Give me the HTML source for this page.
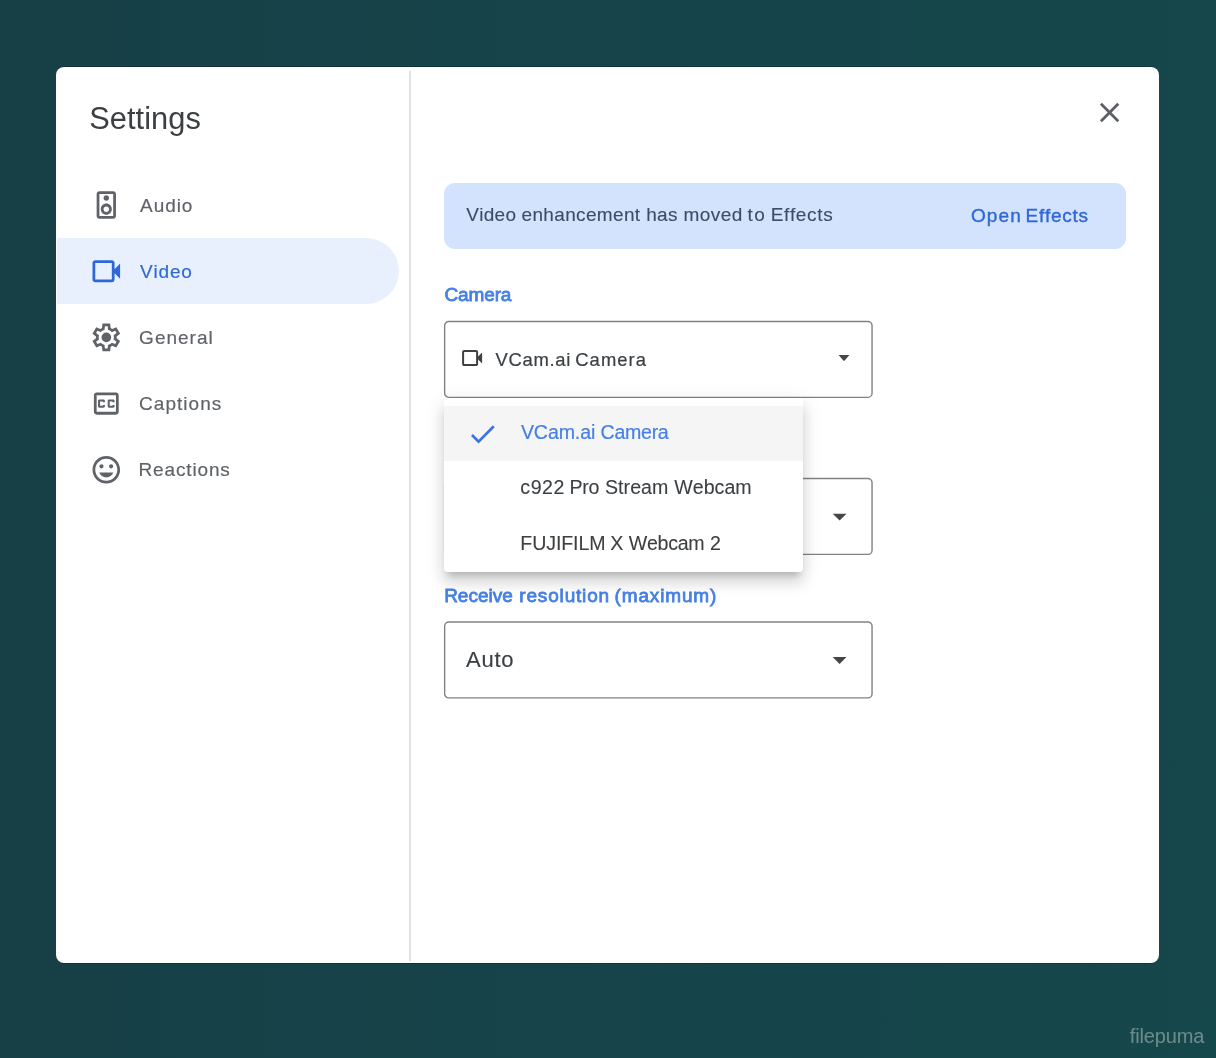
<!DOCTYPE html>
<html lang="en"><head><meta charset="utf-8"><title>Settings</title>
<style>
html,body{margin:0;padding:0}
body{width:1216px;height:1058px;overflow:hidden;position:relative;
 background:linear-gradient(90deg,#163f46 0%,#16444a 50%,#15484a 100%);
 font-family:"Liberation Sans",sans-serif;font-kerning:none}
.t{position:absolute;white-space:nowrap;line-height:1;margin:0;padding:0;font-weight:400;will-change:transform}
.i{position:absolute;display:block}
.w{position:absolute;top:0;white-space:nowrap}
.abs{position:absolute;box-sizing:border-box}
#dlg{left:56.4px;top:66.8px;width:1103.1px;height:896.2px;background:#fff;border-radius:8px;
 box-shadow:0 -1px 0.5px -0.2px rgba(0,0,0,.28),0 1px 0.5px -0.2px rgba(0,0,0,.28)}
#div{left:409.3px;top:71px;width:1.5px;height:889.5px;background:#e2e2e2}
#pill{left:56.5px;top:237.9px;width:342px;height:66.2px;background:#e8f0fe;border-radius:0 33.1px 33.1px 0}
#ban{left:444.1px;top:183px;width:682.3px;height:66.1px;background:#d3e3fd;border-radius:11px}
#menu{left:444.1px;top:397.8px;width:358.6px;height:174px;background:#fff;border-radius:4px;
 box-shadow:0 6.9px 6.9px -4.1px rgba(0,0,0,.2),0 11px 13.8px 1.4px rgba(0,0,0,.10),0 4.1px 19.3px 2.8px rgba(0,0,0,.07)}
#msel{left:444.1px;top:405.9px;width:358.6px;height:55.1px;background:#f5f5f5}
</style></head><body>

<div role="dialog" aria-label="Settings">
<div id="dlg" class="abs"></div>
<div id="div" class="abs"></div>
<h1 class="t" style="left:0;top:104px;font-size:30.8px;color:#3c4043;"><span class="w" style="left:89.20px;letter-spacing:0.046px">Settings</span></h1>
<nav aria-label="Settings sections">
<div id="pill" class="abs"></div>
<svg class="i" style="left:89px;top:188px" width="36" height="36"><g transform="translate(0.75 0.45) scale(1.3790)"><path fill="#5f6368" d="M17 2H7c-1.1 0-2 .9-2 2v16c0 1.1.9 1.99 2 1.99L17 22c1.1 0 2-.9 2-2V4c0-1.1-.9-2-2-2zM7 20V4h10v16H7zm5-11c1.1 0 2-.9 2-2s-.9-2-2-2c-1.11 0-2 .9-2 2s.89 2 2 2zm0 2c-2.21 0-4 1.79-4 4s1.79 4 4 4 4-1.79 4-4-1.79-4-4-4zm0 6c-1.1 0-2-.9-2-2s.9-2 2-2 2 .9 2 2-.9 2-2 2z"/></g></svg>
<div class="t" role="tab" aria-selected="false" style="left:0;top:196px;font-size:19px;color:#5f6368;-webkit-text-stroke:0.18px #5f6368;"><span class="w" style="left:140.04px;letter-spacing:0.945px">Audio</span></div>
<svg class="i" style="left:89px;top:254px" width="36" height="36"><g transform="translate(0.75 0.65) scale(1.3790)"><path fill="#2f68d6" d="M4 20q-.825 0-1.412-.587Q2 18.825 2 18V6q0-.825.588-1.412Q3.175 4 4 4h12q.825 0 1.413.588Q18 5.175 18 6v4.5l4-4v11l-4-4V18q0 .825-.587 1.413Q16.825 20 16 20Zm0-2h12V6H4v12Z"/></g></svg>
<div class="t" role="tab" aria-selected="true" style="left:0;top:262px;font-size:19px;color:#2f68d6;-webkit-text-stroke:0.18px #2f68d6;"><span class="w" style="left:140.00px;letter-spacing:0.807px">Video</span></div>
<svg class="i" style="left:89px;top:320px" width="36" height="36"><g transform="translate(0.75 0.85) scale(1.3790)"><path fill="#5f6368" d="m9.25 22-.4-3.2q-.325-.125-.612-.3-.288-.175-.563-.375L4.7 19.375l-2.750-4.750 2.575-1.950Q4.500 12.500 4.500 12.338v-.675q0-.163.025-.338L1.950 9.375l2.750-4.750 2.975 1.250q.275-.2.575-.375.3-.175.6-.3l.4-3.2h5.500l.4 3.200q.325.125.613.300.287.175.562.375l2.975-1.250 2.750 4.750-2.575 1.950q.025.175.025.338v.674q0 .163-.050.338l2.575 1.950-2.750 4.750-2.950-1.250q-.275.200-.575.375-.300.175-.600.300l-.400 3.200ZM11 20h1.975l.350-2.650q.775-.200 1.438-.588.662-.387 1.212-.937l2.475 1.025.975-1.700-2.150-1.625q.125-.350.175-.738.050-.387.050-.787t-.050-.788q-.050-.387-.175-.737l2.150-1.625-.975-1.700-2.475 1.050q-.550-.575-1.212-.963-.663-.387-1.438-.587L13 4h-1.975l-.350 2.650q-.775.200-1.437.587-.663.388-1.213.938L5.550 7.150l-.975 1.700 2.150 1.600q-.125.375-.175.750-.050.375-.050.800 0 .400.050.775t.175.750l-2.150 1.625.975 1.700 2.475-1.050q.550.575 1.213.962.662.388 1.437.588Z"/><circle cx="12.05" cy="12" r="3.5" fill="#5f6368"/></g></svg>
<div class="t" role="tab" aria-selected="false" style="left:0;top:328px;font-size:19px;color:#5f6368;-webkit-text-stroke:0.18px #5f6368;"><span class="w" style="left:139.12px;letter-spacing:0.995px">General</span></div>
<svg class="i" style="left:89px;top:387px" width="36" height="36"><g transform="translate(0.75 0.05) scale(1.3790)"><path fill="#5f6368" d="M19 4H5c-1.11 0-2 .9-2 2v12c0 1.1.89 2 2 2h14c1.1 0 2-.9 2-2V6c0-1.1-.9-2-2-2zm0 14H5V6h14v12zM7 15h3c.55 0 1-.45 1-1v-1H9.500v.5h-2v-3h2v.5H11v-1c0-.55-.45-1-1-1H7c-.55 0-1 .45-1 1v4c0 .55.45 1 1 1zm7 0h3c.55 0 1-.45 1-1v-1h-1.500v.5h-2v-3h2v.5H18v-1c0-.55-.45-1-1-1h-3c-.55 0-1 .45-1 1v4c0 .55.45 1 1 1z"/></g></svg>
<div class="t" role="tab" aria-selected="false" style="left:0;top:394px;font-size:19px;color:#5f6368;-webkit-text-stroke:0.18px #5f6368;"><span class="w" style="left:139.12px;letter-spacing:1.029px">Captions</span></div>
<svg class="i" style="left:89px;top:453px" width="36" height="36"><g transform="translate(0.75 0.25) scale(1.3790)"><path fill="#5f6368" d="M11.99 2C6.47 2 2 6.48 2 12s4.47 10 9.990 10C17.520 22 22 17.520 22 12S17.520 2 11.990 2zM12 20c-4.420 0-8-3.580-8-8s3.580-8 8-8 8 3.580 8 8-3.580 8-8 8zm3.500-9c.830 0 1.500-.670 1.500-1.500S16.330 8 15.500 8 14 8.670 14 9.500s.670 1.500 1.500 1.500zm-7 0c.830 0 1.500-.670 1.500-1.500S9.330 8 8.500 8 7 8.670 7 9.500 7.670 11 8.500 11zm3.500 6.500c2.330 0 4.310-1.460 5.110-3.500H6.890c.8 2.040 2.780 3.500 5.110 3.500z"/></g></svg>
<div class="t" role="tab" aria-selected="false" style="left:0;top:460px;font-size:19px;color:#5f6368;-webkit-text-stroke:0.18px #5f6368;"><span class="w" style="left:138.52px;letter-spacing:0.850px">Reactions</span></div>
</nav>
<svg class="i" style="left:1093px;top:95px" width="36" height="36"><g transform="translate(0.05 0.95) scale(1.3790)"><path fill="#5c5f63" d="M19 6.41L17.59 5 12 10.59 6.41 5 5 6.410 10.590 12 5 17.590 6.410 19 12 13.410 17.590 19 19 17.590 13.410 12z"/></g></svg>
<section aria-label="Video">
<div id="ban" class="abs"></div>
<p class="t" style="left:0;top:205px;font-size:19px;color:#3f4a66;-webkit-text-stroke:0.12px #3f4a66;"><span class="w" style="left:466.34px;letter-spacing:0.262px">Video</span> <span class="w" style="left:521.51px;letter-spacing:0.347px">enhancement</span> <span class="w" style="left:646.20px;letter-spacing:0.365px">has</span> <span class="w" style="left:683.56px;letter-spacing:0.430px">moved</span> <span class="w" style="left:747.53px;letter-spacing:1.500px">to</span> <span class="w" style="left:770.66px;letter-spacing:0.655px">Effects</span></p>
<div class="t" role="button" style="left:0;top:206px;font-size:19px;color:#2f68d6;-webkit-text-stroke:0.38px #2f68d6;"><span class="w" style="left:970.98px;letter-spacing:1.098px">Open</span> <span class="w" style="left:1025.62px;letter-spacing:0.735px">Effects</span></div>
<label class="t" style="left:0;top:285px;font-size:19px;color:#4680e6;-webkit-text-stroke:0.8px #4680e6;"><span class="w" style="left:444.54px;letter-spacing:-0.142px">Camera</span></label>
<svg class="i" style="left:442px;top:319px" width="434" height="82"><rect x="2.65" y="2.50" width="427.40" height="75.85" rx="4.2" fill="#fff" stroke="#828282" stroke-width="1.4"/></svg>
<svg class="i" style="left:460px;top:346px" width="26" height="26"><g transform="translate(0.10 0.00) scale(1.0000)"><path fill="#404040" d="M4 20q-.825 0-1.412-.587Q2 18.825 2 18V6q0-.825.588-1.412Q3.175 4 4 4h12q.825 0 1.413.588Q18 5.175 18 6v4.5l4-4v11l-4-4V18q0 .825-.587 1.413Q16.825 20 16 20Zm0-2h12V6H4v12Z"/></g></svg>
<div class="t" role="combobox" aria-expanded="true" style="left:0;top:351px;font-size:18.4px;color:#3c4043;-webkit-text-stroke:0.22px #3c4043;"><span class="w" style="left:495.54px;letter-spacing:0.704px">VCam.ai</span> <span class="w" style="left:575.29px;letter-spacing:1.050px">Camera</span></div>
<svg class="i" style="left:836px;top:353px" width="17" height="11"><path fill="#444746" d="M2.60 2.00L13.40 2.00L8.70 7.50Q8.00 8.20 7.30 7.50Z"/></svg>
<svg class="i" style="left:442px;top:476px" width="434" height="82"><rect x="2.65" y="2.55" width="427.40" height="75.85" rx="4.2" fill="#fff" stroke="#828282" stroke-width="1.4"/></svg>
<svg class="i" style="left:830px;top:511px" width="20" height="13"><path fill="#444746" d="M2.70 2.70L16.50 2.70L9.60 9.60Z"/></svg>
<label class="t" style="left:0;top:586px;font-size:19px;color:#4680e6;-webkit-text-stroke:0.8px #4680e6;"><span class="w" style="left:444.14px;letter-spacing:-0.007px">Receive</span> <span class="w" style="left:519.34px;letter-spacing:0.824px">resolution</span> <span class="w" style="left:614.52px;letter-spacing:0.858px">(maximum)</span></label>
<svg class="i" style="left:442px;top:620px" width="434" height="81"><rect x="2.65" y="2.05" width="427.40" height="75.85" rx="4.2" fill="#fff" stroke="#828282" stroke-width="1.4"/></svg>
<div class="t" role="combobox" aria-expanded="false" style="left:0;top:649px;font-size:22px;color:#3c4043;-webkit-text-stroke:0.15px #3c4043;"><span class="w" style="left:466.11px;letter-spacing:0.737px">Auto</span></div>
<svg class="i" style="left:830px;top:655px" width="20" height="12"><path fill="#444746" d="M2.70 2.00L16.50 2.00L9.60 8.90Z"/></svg>
<div role="listbox" aria-label="Camera">
<div id="menu" class="abs"></div>
<div id="msel" class="abs"></div>
<svg class="i" style="left:466px;top:417px" width="35" height="35"><g transform="translate(0.40 0.80) scale(1.3500)"><path fill="#3b74e0" d="M9 16.17L4.83 12l-1.42 1.41L9 19 21 7l-1.41-1.41z"/></g></svg>
<div class="t" role="option" aria-selected="true" style="left:0;top:423px;font-size:19.6px;color:#4680e6;-webkit-text-stroke:0.2px #4680e6;"><span class="w" style="left:520.91px;letter-spacing:-0.125px">VCam.ai</span> <span class="w" style="left:600.60px;letter-spacing:-0.303px">Camera</span></div>
<div class="t" role="option" style="left:0;top:478px;font-size:19.6px;color:#3c4043;-webkit-text-stroke:0.1px #3c4043;"><span class="w" style="left:520.37px;letter-spacing:0.506px">c922</span> <span class="w" style="left:569.39px;letter-spacing:-0.235px">Pro</span> <span class="w" style="left:605.01px;letter-spacing:0.042px">Stream</span> <span class="w" style="left:674.21px;letter-spacing:0.030px">Webcam</span></div>
<div class="t" role="option" style="left:0;top:534px;font-size:19.6px;color:#3c4043;-webkit-text-stroke:0.1px #3c4043;"><span class="w" style="left:520.29px;letter-spacing:-0.100px">FUJIFILM</span> <span class="w" style="left:610.16px;letter-spacing:0.000px">X</span> <span class="w" style="left:628.71px;letter-spacing:-0.270px">Webcam</span> <span class="w" style="left:710.11px;letter-spacing:0.000px">2</span></div>
</div>
</section>
</div>
<div class="t" style="left:0;top:1026px;font-size:20.0px;color:rgba(255,255,255,0.37);"><span class="w" style="left:1129.72px;letter-spacing:-0.130px">filepuma</span></div>

</body></html>
